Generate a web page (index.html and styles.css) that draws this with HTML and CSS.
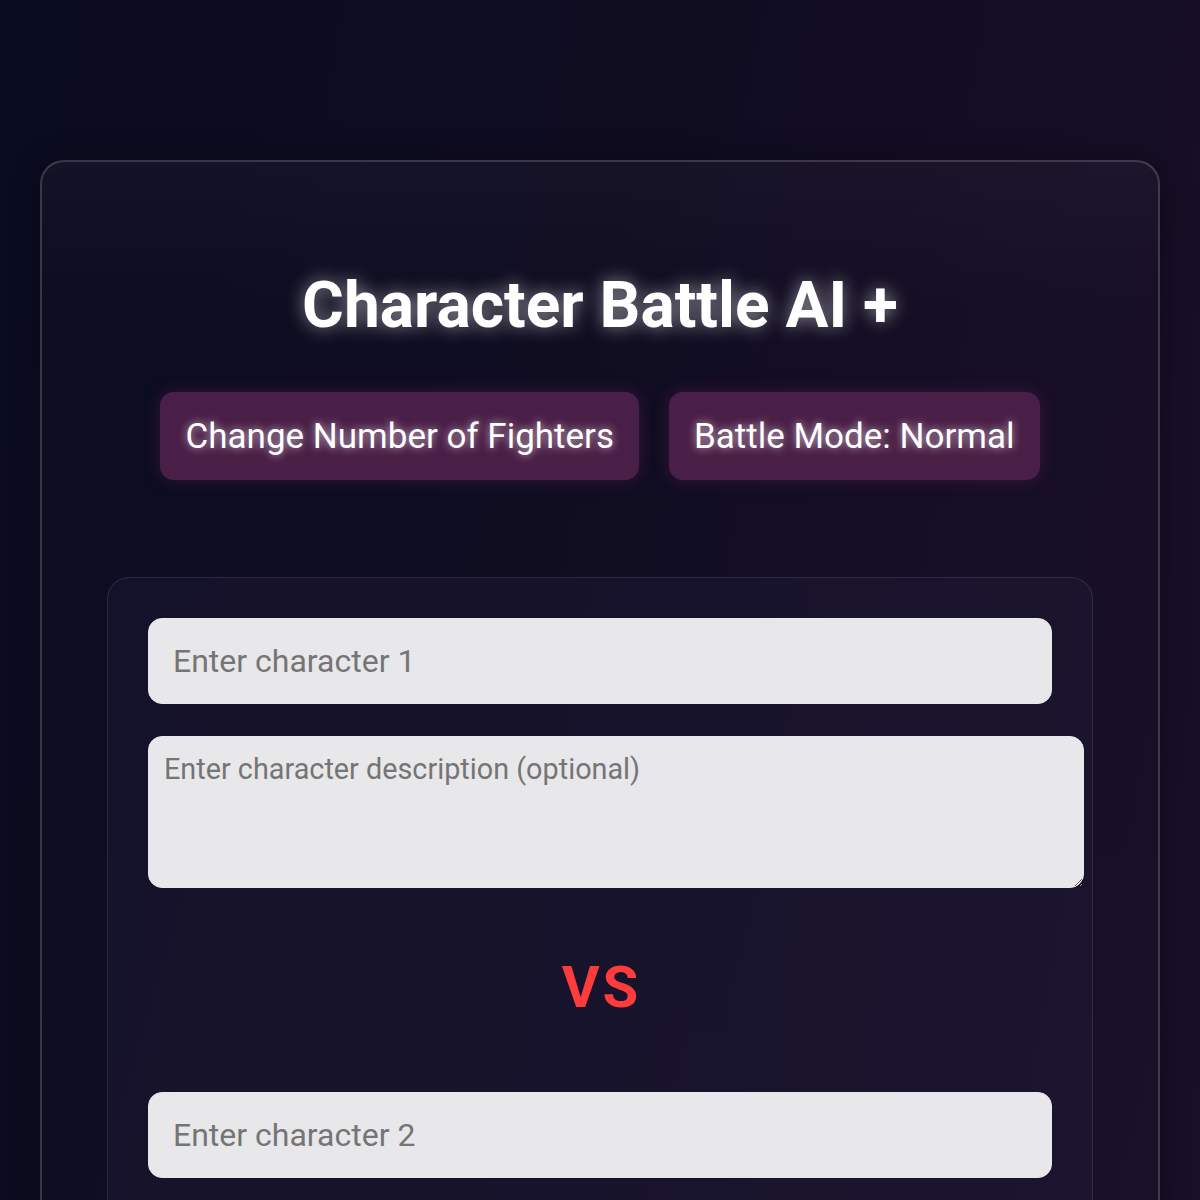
FILE: index.html
```html
<!DOCTYPE html>
<html lang="en">
<head>
<meta charset="utf-8">
<title>Character Battle AI +</title>
<link rel="stylesheet" href="styles.css">
</head>
<body>
<main class="container">
  <h1 class="title">Character Battle AI +</h1>
  <div class="controls">
    <button class="btn">Change Number of Fighters</button>
    <button class="btn">Battle Mode: Normal</button>
  </div>
  <section class="fighters">
    <input class="char-input" type="text" placeholder="Enter character 1">
    <textarea class="char-desc" placeholder="Enter character description (optional)"></textarea>
    <div class="vs">VS</div>
    <input class="char-input" type="text" placeholder="Enter character 2">
  </section>
</main>
</body>
</html>
```

FILE: styles.css
```css
html, body {
  margin: 0;
  padding: 0;
}
body {
  min-height: 1200px;
  font-family: Roboto, "Noto Sans", sans-serif;
  color: #fff;
  background: linear-gradient(100deg, #0a0c20 0%, #0f0c20 45%, #1a0f28 100%);
  overflow: hidden;
}
.container {
  margin: 160px 40px 0;
  padding: 0 65px 40px;
  border: 2px solid rgba(255, 255, 255, 0.17);
  border-bottom: none;
  border-radius: 24px 24px 0 0;
  background: linear-gradient(180deg, rgba(255,255,255,0.03) 0%, rgba(255,255,255,0.008) 12%, rgba(255,255,255,0.01) 100%);
  box-shadow: 0 0 30px rgba(0, 0, 0, 0.35);
  min-height: 1100px;
}
.title {
  margin: 0;
  padding-top: 106px;
  text-align: center;
  font-size: 64px;
  font-weight: 700;
  line-height: 75px;
  color: #ffffff;
  text-shadow: 0 0 18px rgba(255, 255, 255, 0.55);
}
.controls {
  display: flex;
  justify-content: center;
  gap: 30px;
  margin-top: 49px;
}
.btn {
  font-family: Roboto, "Noto Sans", sans-serif;
  font-size: 35px;
  color: #ffffff;
  height: 88px;
  padding: 0 25px;
  border: none;
  border-radius: 14px;
  background: #4a1f47;
  box-shadow: 0 0 16px rgba(110, 30, 100, 0.4);
  text-shadow: 0 0 8px rgba(255, 255, 255, 0.7);
}
.fighters {
  margin-top: 97px;
  padding: 40px;
  border: 1px solid rgba(255, 255, 255, 0.1);
  border-radius: 22px;
  background: rgba(32, 28, 58, 0.4);
  min-height: 700px;
  display: flex;
  flex-direction: column;
  align-items: flex-start;
}
.char-input {
  box-sizing: border-box;
  width: 904px;
  height: 86px;
  padding: 0 24px;
  border: 1px solid #e8e8ea;
  border-radius: 14px;
  background: #e8e8ea;
  font-family: Roboto, "Noto Sans", sans-serif;
  font-size: 32px;
  color: #333;
  outline: none;
}
.char-input::placeholder,
.char-desc::placeholder {
  color: #757575;
}
.char-desc {
  margin-top: 32px;
  width: 904px;
  height: 118px;
  padding: 15px 15px 17px;
  border: 1px solid #e8e8ea;
  border-radius: 14px;
  background: #e8e8ea;
  font-family: Roboto, "Noto Sans", sans-serif;
  font-size: 28.8px;
  color: #333;
  outline: none;
}
.vs {
  align-self: stretch;
  text-align: center;
  margin: 68px 0 73px;
  padding-left: 3px;
  font-size: 58px;
  line-height: 63px;
  font-weight: 700;
  letter-spacing: 3px;
  color: #ff3b3b;
}
```
